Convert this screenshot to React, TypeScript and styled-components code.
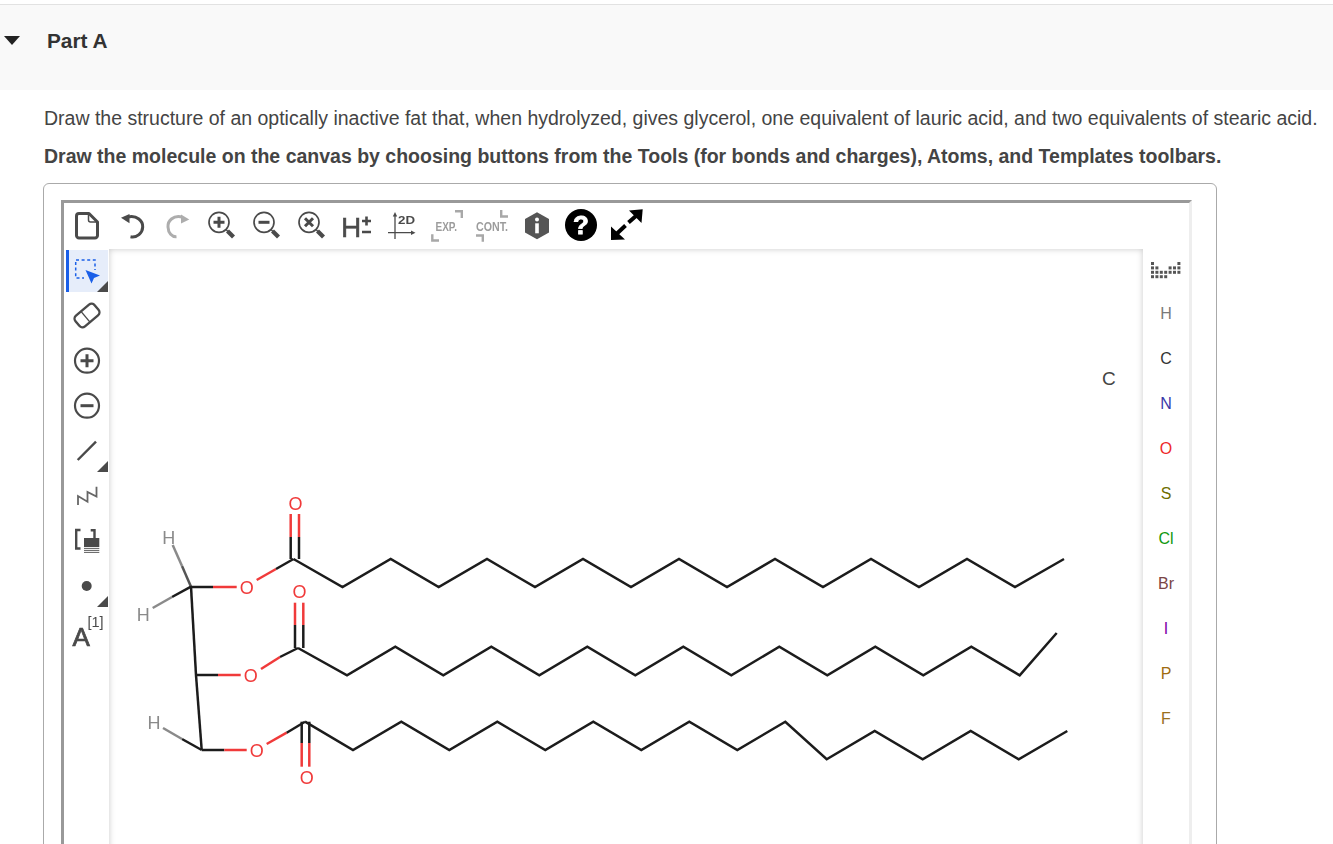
import React from 'react';
import styled, { createGlobalStyle } from 'styled-components';

const Global = createGlobalStyle`
  html, body { margin: 0; padding: 0; height: 100%; overflow: hidden; background: #fff; }
  body { font-family: "Liberation Sans", Arial, sans-serif; color: #333; }
  #root { height: 844px; overflow: hidden; }
  svg text { font-family: "Liberation Sans", Arial, sans-serif; }
`;

const Page = styled.main`
  padding-top: 4px;
`;
const PartHeader = styled.header`
  display: flex;
  align-items: center;
  height: 86px;
  box-sizing: border-box;
  padding-bottom: 14px;
  border-top: 1px solid #e2e2e2;
  background: #f9f9f9;
`;
const Caret = styled.span`
  width: 0;
  height: 0;
  margin: 0 27px 1px 4px;
  border-left: 8px solid transparent;
  border-right: 8px solid transparent;
  border-top: 9px solid #222;
`;
const PartTitle = styled.h2`
  margin: 0;
  font-size: 20.8px;
  font-weight: 700;
  color: #333;
`;
const Body = styled.section`
  padding: 17px 0 0 44px;
`;
const Prompt = styled.p<{ $bold?: boolean }>`
  margin: 0 0 15px;
  height: 23px;
  line-height: 23px;
  font-size: 19.5px;
  white-space: nowrap;
  color: #444;
  font-weight: ${p => (p.$bold ? 700 : 400)};
`;
const Card = styled.div`
  box-sizing: border-box;
  width: 1174px;
  margin: 15px 0 0 -1px;
  padding: 16px 24px 0 17px;
  border: 1px solid #aaa;
  border-radius: 6px;
  height: 800px;
`;
const Editor = styled.div`
  width: 1131px;
  box-sizing: border-box;
  border-top: 3px solid #999;
  border-left: 3px solid #999;
  border-right: 3px solid #eee;
`;
const TopBar = styled.div`
  display: flex;
  height: 46px;
`;
const TopButton = styled.div`
  width: 45px;
  height: 45px;
  flex: none;
  svg { display: block; filter: blur(0.25px); }
`;
const Work = styled.div`
  display: flex;
  height: 640px;
`;
const LeftBar = styled.div`
  display: flex;
  flex-direction: column;
  width: 45px;
  flex: none;
`;
const ToolButton = styled.div<{ $active?: boolean; $corner?: boolean }>`
  position: relative;
  box-sizing: border-box;
  flex: none;
  width: 42px;
  height: 42px;
  margin: 1px 1px 2px 2px;
  background: ${p => (p.$active ? '#e6edfa' : 'transparent')};
  border-left: ${p => (p.$active ? '3px solid #1a5fe8' : '0')};
  svg { position: absolute; left: ${p => (p.$active ? '-3px' : '0')}; top: 0; filter: blur(0.25px); }
  &::after {
    content: '';
    display: ${p => (p.$corner ? 'block' : 'none')};
    position: absolute;
    right: 0;
    bottom: 0;
    width: 0;
    height: 0;
    border-left: 11px solid transparent;
    border-bottom: 11px solid #4a4a4a;
  }
`;
const Canvas = styled.div`
  position: relative;
  flex: 1;
  background: #fff;
  box-shadow: inset 0 0 6px rgba(0, 0, 0, 0.22);
`;
const CanvasAtom = styled.span`
  position: absolute;
  left: 993px;
  top: 119px;
  font-size: 19px;
  line-height: 22px;
  color: #444;
`;
const Molecule = styled.svg`
  position: absolute;
  left: 0;
  top: 0;
  filter: blur(0.35px);
`;
const AtomBar = styled.div`
  width: 46px;
  flex: none;
`;
const PeriodicButton = styled.div`
  height: 42px;
  display: flex;
  align-items: center;
  justify-content: center;
`;
const AtomButton = styled.div<{ $color: string }>`
  height: 45px;
  display: flex;
  align-items: center;
  justify-content: center;
  font-size: 16px;
  color: ${p => p.$color};
`;

const INK = '#4a4a4a';

const Top = ({ i, children }: { i: number; children: React.ReactNode }) => (
  <TopButton>
    <svg width="45" height="45" viewBox={`${64 + 45 * i} 203 45 45`}>{children}</svg>
  </TopButton>
);
const Tool = ({ i, active, corner, children }: { i: number; active?: boolean; corner?: boolean; children: React.ReactNode }) => (
  <ToolButton $active={active} $corner={corner}>
    <svg width="42" height="42" viewBox={`66 ${250 + 45 * i} 42 42`}>{children}</svg>
  </ToolButton>
);

const Magnifier = ({ cx, children }: { cx: number; children: React.ReactNode }) => (
  <g>
    <circle cx={cx} cy={222.3} r={10} fill="none" stroke={INK} strokeWidth={1.7} />
    <path d={`M${cx + 7} 229.5 L${cx + 9} 231.5`} stroke={INK} strokeWidth={1.5} />
    <path d={`M${cx + 8.5} 231 L${cx + 14.5} 237`} stroke={INK} strokeWidth={4.2} />
    {children}
  </g>
);

const chain1 = '293.5,559 342.5,587 390.7,559 438.7,587 487,559 535,587 583,559 631,587 679,559 727,587 775,559 823,587 871,559 919,587 967,559 1015,587 1064,559';
const chain2 = '298,648 347,675.3 395.3,646.7 443.3,675.3 491.3,646.7 539.3,675.3 587.3,646.7 635.3,675.3 683.3,646.7 731.3,675.3 779.3,646.7 827.3,675.3 875.3,646.7 923.3,675.3 971.3,646.7 1019.7,675.3 1056.7,633';
const chain3 = '305,721.7 353,750 401.3,721.7 449.3,750 497.3,721.7 545.3,750 593.3,721.7 641.3,750 689.3,721.7 737.3,750 785.3,721.7 826.7,759.3 874.7,731 922.7,759.3 970.7,731 1018.7,759.3 1067.3,731';

const BLACK = '#1c1c1c';
const RED = '#f03a3a';
const GREY = '#8a8a8a';

type Seg = [number, number, number, number, string];
const segs: Seg[] = [
  [191, 586.7, 196, 675, BLACK],
  [196, 675, 201.7, 750, BLACK],
  [191, 586.7, 182, 566, '#555'],
  [182, 566, 172.7, 545, GREY],
  [191, 586.7, 172, 597, BLACK],
  [172, 597, 152.7, 608, GREY],
  [201.7, 750, 182, 739, BLACK],
  [182, 739, 163, 728, GREY],
  [191, 587, 213, 587, BLACK],
  [213, 587, 236.7, 587, RED],
  [256.7, 580, 276, 569, RED],
  [276, 569, 293.5, 559, BLACK],
  [290.7, 559, 290.7, 537, BLACK],
  [290.7, 537, 290.7, 514, RED],
  [299, 559, 299, 537, BLACK],
  [299, 537, 299, 514, RED],
  [196, 675, 218, 675, BLACK],
  [218, 675, 240.7, 675, RED],
  [261, 669, 280, 657, RED],
  [280, 657, 298, 648, BLACK],
  [295, 648, 295, 625, BLACK],
  [295, 625, 295, 602.7, RED],
  [303.3, 648, 303.3, 625, BLACK],
  [303.3, 625, 303.3, 602.7, RED],
  [201.7, 750, 224.3, 750, BLACK],
  [224.3, 750, 246.7, 750, RED],
  [266.7, 744, 286.7, 732.7, RED],
  [286.7, 732.7, 305, 721.7, BLACK],
  [301.7, 721.7, 301.7, 743, BLACK],
  [301.7, 743, 301.7, 766.7, RED],
  [309.3, 721.7, 309.3, 743, BLACK],
  [309.3, 743, 309.3, 766.7, RED],
];
const labels: [number, number, string][] = [
  [168.7, 543.5, 'H'], [143.3, 620.5, 'H'], [154, 728.5, 'H'],
  [246.7, 593.5, 'O'], [295.5, 510, 'O'], [250.7, 681.5, 'O'], [299.5, 598, 'O'], [256.7, 756.5, 'O'], [306.7, 784, 'O'],
];

const periodic: [number, number][] = [
  [0, 0], [6, 0],
  [0, 1], [1, 1], [4, 1], [5, 1], [6, 1],
  [0, 2], [1, 2], [2, 2], [3, 2], [4, 2], [5, 2], [6, 2],
  [0, 3], [1, 3], [2, 3], [3, 3],
];

const atoms: [string, string][] = [
  ['H', '#7a7a7a'], ['C', '#333'], ['N', '#3a3aa8'], ['O', '#ee2a2a'], ['S', '#6e6e00'],
  ['Cl', '#119911'], ['Br', '#7a4545'], ['I', '#8000a8'], ['P', '#a06c10'], ['F', '#99701e'],
];

export default function App() {
  return (
    <Page>
      <Global />
      <PartHeader>
        <Caret />
        <PartTitle>Part A</PartTitle>
      </PartHeader>
      <Body>
        <Prompt>Draw the structure of an optically inactive fat that, when hydrolyzed, gives glycerol, one equivalent of lauric acid, and two equivalents of stearic acid.</Prompt>
        <Prompt $bold>Draw the molecule on the canvas by choosing buttons from the Tools (for bonds and charges), Atoms, and Templates toolbars.</Prompt>
        <Card>
          <Editor>
            <TopBar>
              <Top i={0}>
                <path d="M76.5 216 a2.5 2.5 0 0 1 2.5 -2.5 H89 L97.5 222 V235.5 a2.5 2.5 0 0 1 -2.5 2.5 H79 a2.5 2.5 0 0 1 -2.5 -2.5 Z" fill="none" stroke={INK} strokeWidth={3} strokeLinejoin="round" />
                <path d="M88.5 214 V220 a2 2 0 0 0 2 2 H97" fill="none" stroke={INK} strokeWidth={1.5} />
              </Top>
              <Top i={1}>
                <path d="M128 217 C 137 215, 143 221, 142.7 227 C 142.5 233, 137 238, 130.5 236.7" fill="none" stroke={INK} strokeWidth={3} />
                <path d="M121 217.7 L129.5 214 L129.5 223.3 Z" fill={INK} />
              </Top>
              <Top i={2}>
                <path d="M182 217 C 173 215, 167.5 221, 168 227 C 168.2 233, 172 237, 176.5 236.7" fill="none" stroke="#adadad" strokeWidth={3} />
                <path d="M189.3 219.5 L181 214.5 L181 223.5 Z" fill="#adadad" />
              </Top>
              <Top i={3}>
                <Magnifier cx={219}><path d="M213.5 222.3 H224.5 M219 216.8 V227.8" stroke={INK} strokeWidth={3} /></Magnifier>
              </Top>
              <Top i={4}>
                <Magnifier cx={264}><path d="M258.5 222.3 H269.5" stroke={INK} strokeWidth={3} /></Magnifier>
              </Top>
              <Top i={5}>
                <Magnifier cx={309}><path d="M305 218.3 L313 226.3 M313 218.3 L305 226.3" stroke={INK} strokeWidth={3} /></Magnifier>
              </Top>
              <Top i={6}>
                <text x={341} y={237} fontSize={28} fill={INK} stroke={INK} strokeWidth={0.5}>H</text>
                <path d="M362 221 H371 M366.5 216.5 V225.5 M362 232 H371" stroke={INK} strokeWidth={2.6} />
              </Top>
              <Top i={7}>
                <path d="M395 215 V239 M388 232.7 H412" stroke={INK} strokeWidth={1.3} fill="none" />
                <path d="M395 212 L392.8 216.5 H397.2 Z M415.5 232.7 L411 230.5 V234.9 Z" fill={INK} />
                <text x={398} y={223.5} fontSize={10.5} fontWeight={700} fill={INK} textLength={17} lengthAdjust="spacingAndGlyphs">2D</text>
              </Top>
              <Top i={8}>
                <path d="M455 211.3 H461.8 V218 M432.3 234.3 V240.5 H439" fill="none" stroke="#a8a8a8" strokeWidth={2.4} />
                <text x={435.5} y={231} fontSize={12.5} fontWeight={700} fill="#9c9c9c" textLength={21.5} lengthAdjust="spacingAndGlyphs">EXP.</text>
              </Top>
              <Top i={9}>
                <path d="M501.2 210 V216.5 H508 M476 235.5 H482.8 V241.7" fill="none" stroke="#a8a8a8" strokeWidth={2.4} />
                <text x={476} y={231} fontSize={12.5} fontWeight={700} fill="#9c9c9c" textLength={32} lengthAdjust="spacingAndGlyphs">CONT.</text>
              </Top>
              <Top i={10}>
                <path d="M537 212.3 L549 219 V232.5 L537 239.2 L525 232.5 V219 Z" fill="#555" />
                <circle cx={537} cy={219.5} r={2} fill="#fff" />
                <rect x={535.2} y={223.3} width={3.6} height={10} fill="#fff" />
              </Top>
              <Top i={11}>
                <circle cx={581} cy={225} r={16} fill="#000" />
                <text x={581} y={234} fontSize={26} fontWeight={700} fill="#fff" stroke="#fff" strokeWidth={0.8} textAnchor="middle">?</text>
              </Top>
              <Top i={12}>
                <path d="M611 240 V226.5 L625 239.5 Z" fill="#000" />
                <path d="M642.7 209.3 L629 210.5 L641.5 223 Z" fill="#000" />
                <path d="M617 233.5 L625.5 225.5 M628.5 222.5 L636.5 215.5" stroke="#000" strokeWidth={4} />
              </Top>
            </TopBar>
            <Work>
              <LeftBar>
                <Tool i={0} active corner>
                  <path d="M76 260 H95 V270 M75.7 262 V278 H84" fill="none" stroke="#1a5fe8" strokeWidth={1.5} strokeDasharray="3 2.6" />
                  <path d="M85.5 270 L100 275.5 L94 278 L91.5 283.5 Z" fill="#1a5fe8" />
                </Tool>
                <Tool i={1}>
                  <g transform="translate(87 315.5) rotate(-40)">
                    <rect x={-12.5} y={-7} width={25} height={14} rx={4} fill="none" stroke={INK} strokeWidth={2.4} />
                    <path d="M-2 -7 V7" stroke={INK} strokeWidth={1.4} />
                  </g>
                </Tool>
                <Tool i={2}>
                  <circle cx={87} cy={360.7} r={12} fill="none" stroke={INK} strokeWidth={2.2} />
                  <path d="M80.5 360.7 H93.5 M87 354.2 V367.2" stroke={INK} strokeWidth={3} />
                </Tool>
                <Tool i={3}>
                  <circle cx={87} cy={405.7} r={12} fill="none" stroke={INK} strokeWidth={2.2} />
                  <path d="M80.5 405.7 H93.5" stroke={INK} strokeWidth={3} />
                </Tool>
                <Tool i={4} corner>
                  <path d="M77.7 460 L96 441.7" stroke={INK} strokeWidth={2.4} />
                </Tool>
                <Tool i={5}>
                  <path d="M78 505 V496 L87.5 501.7 V492 L96.5 496.5 V486.7" fill="none" stroke="#666" strokeWidth={1.8} />
                </Tool>
                <Tool i={6}>
                  <path d="M80.5 530 H76.2 V548.5 H80.5" fill="none" stroke={INK} strokeWidth={2.4} />
                  <path d="M90.7 530.2 H94.5 V538" fill="none" stroke={INK} strokeWidth={2.4} />
                  <rect x={84} y={538} width={15.3} height={9} fill={INK} />
                  <path d="M84 548.4 H99.3 M84 550.4 H99.3 M84 552.4 H99.3" stroke={INK} strokeWidth={0.9} />
                </Tool>
                <Tool i={7} corner>
                  <circle cx={86.7} cy={586} r={5} fill={INK} />
                </Tool>
                <Tool i={8}>
                  <text x={72.5} y={646} fontSize={26} fill={INK} stroke={INK} strokeWidth={0.7}>A</text>
                  <text x={87.5} y={627} fontSize={14.5} fill={INK}>[1]</text>
                </Tool>
              </LeftBar>
              <Canvas>
                <Molecule width="1034" height="595" viewBox="109 249 1034 595">
                  {segs.map(([a, b, c, d, col], k) => (
                    <line key={k} x1={a} y1={b} x2={c} y2={d} stroke={col} strokeWidth={2.5} />
                  ))}
                  {[chain1, chain2, chain3].map(pts => (
                    <polyline key={pts} points={pts} fill="none" stroke={BLACK} strokeWidth={2.5} />
                  ))}
                  {labels.map(([x, y, t], k) => (
                    <text key={k} x={x} y={y} fontSize={18} textAnchor="middle" fill={t === 'O' ? RED : GREY}>{t}</text>
                  ))}
                </Molecule>
                <CanvasAtom>C</CanvasAtom>
              </Canvas>
              <AtomBar>
                <PeriodicButton>
                  <svg width="30" height="17" viewBox="0 0 30 17">
                    {periodic.map(([c, r]) => (
                      <rect key={`${c}-${r}`} x={c * 4.4} y={r * 4.4} width={3} height={3} fill="#555" />
                    ))}
                  </svg>
                </PeriodicButton>
                {atoms.map(([t, col]) => (
                  <AtomButton key={t} $color={col}>{t}</AtomButton>
                ))}
              </AtomBar>
            </Work>
          </Editor>
        </Card>
      </Body>
    </Page>
  );
}
